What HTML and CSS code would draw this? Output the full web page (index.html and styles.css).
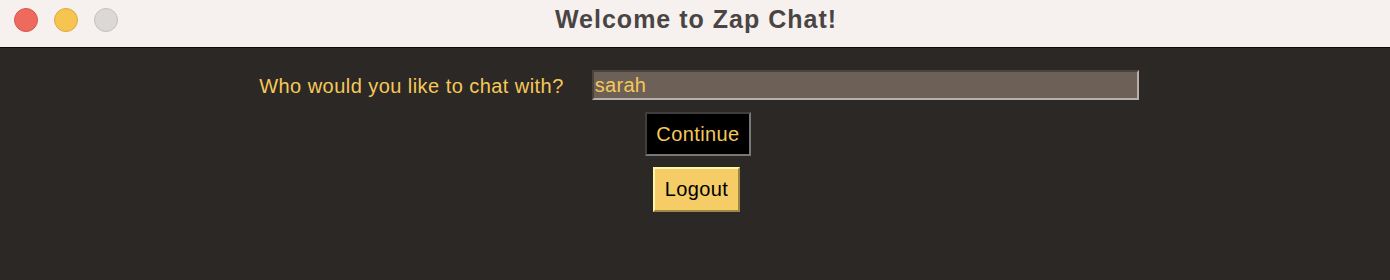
FILE: index.html
```html
<!DOCTYPE html>
<html>
<head>
<meta charset="utf-8">
<link rel="stylesheet" href="styles.css">
</head>
<body>
<div class="window">
  <div class="titlebar">
    <div class="lights">
      <span class="light red"></span>
      <span class="light yellow"></span>
      <span class="light gray"></span>
    </div>
    <div class="title">Welcome to Zap Chat!</div>
  </div>
  <div class="content">
    <div class="row">
      <label class="label">Who would you like to chat with?</label>
      <div class="input">sarah</div>
    </div>
    <button class="btn continue">Continue</button>
    <button class="btn logout">Logout</button>
  </div>
</div>
</body>
</html>
```
FILE: styles.css
```css
html, body {
  margin: 0;
  padding: 0;
  background: #2c2825;
  font-family: "Liberation Sans", Arial, sans-serif;
}
.window {
  width: 1390px;
  height: 280px;
  display: flex;
  flex-direction: column;
}
.titlebar {
  height: 47px;
  background: #f6f1ee;
  border-bottom: 1px solid #0c0b0a;
  display: flex;
  align-items: center;
  justify-content: center;
  position: relative;
}
.lights {
  position: absolute;
  left: 14px;
  top: 8px;
  display: flex;
  gap: 16px;
}
.light {
  width: 22px;
  height: 22px;
  border-radius: 50%;
  display: block;
}
.red { background: #ee6a5f; border: 1px solid #d9564c; }
.yellow { background: #f5c451; border: 1px solid #dcaa3c; }
.gray { background: #dcd8d5; border: 1px solid #c4bfbb; }
.title {
  font-size: 25px;
  font-weight: bold;
  letter-spacing: 1px;
  color: #4a4544;
  margin-left: 2px;
  margin-top: -9px;
}
.content {
  flex: 1;
  display: flex;
  flex-direction: column;
  align-items: center;
  padding-top: 22px;
}
.row {
  display: flex;
  align-items: center;
  gap: 28px;
  margin-left: 8px;
}
.label {
  color: #f5c85a;
  font-size: 20px;
  letter-spacing: 0.45px;
  padding-top: 3px;
}
.input {
  box-sizing: border-box;
  width: 547px;
  height: 30px;
  background: #6d6057;
  border-top: 2px solid #4a423d;
  border-left: 2px solid #4a423d;
  border-bottom: 2px solid #b8b0a8;
  border-right: 2px solid #b8b0a8;
  color: #f5c85a;
  font-size: 20px;
  letter-spacing: 0.3px;
  padding: 2px 0 0 1px;
  line-height: 22px;
}
.btn {
  box-sizing: border-box;
  font-family: "Liberation Sans", Arial, sans-serif;
  font-size: 20px;
  letter-spacing: 0.4px;
  padding: 0;
  display: flex;
  align-items: center;
  justify-content: center;
}
.continue {
  margin-top: 12px;
  width: 106px;
  height: 44px;
  background: #000;
  color: #f5c85a;
  border-top: 2px solid #3e3e3e;
  border-left: 2px solid #3e3e3e;
  border-bottom: 2px solid #777;
  border-right: 2px solid #777;
  margin-left: 6px;
}
.logout {
  margin-top: 11px;
  width: 87px;
  height: 45px;
  background: #f5cc66;
  color: #000;
  border-top: 2px solid #fff6a8;
  border-left: 2px solid #fff6a8;
  border-bottom: 2px solid #9c8646;
  border-right: 2px solid #9c8646;
  margin-left: 3px;
}
```
